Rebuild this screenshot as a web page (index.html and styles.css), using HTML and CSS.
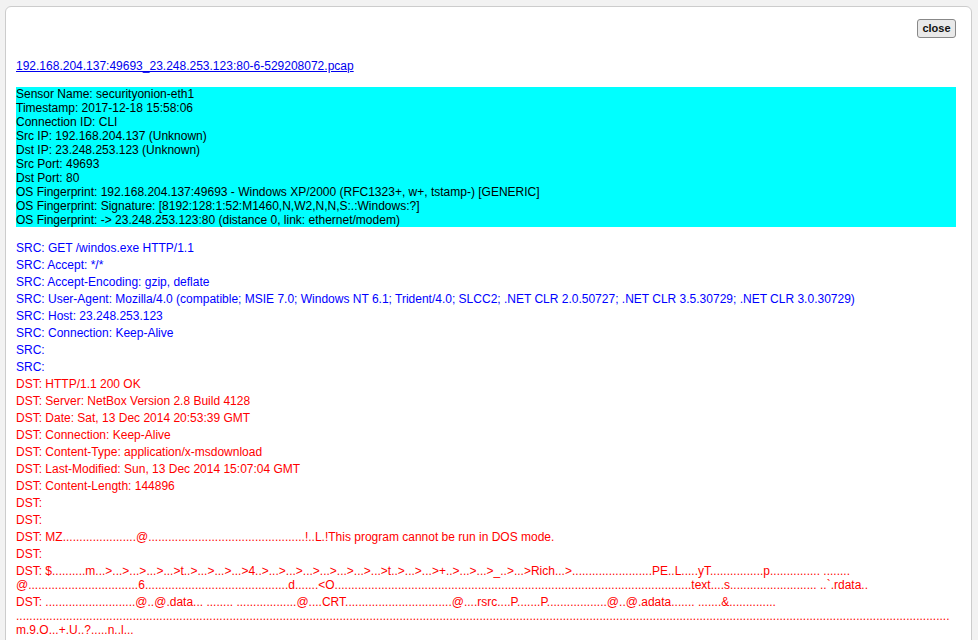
FILE: index.html
```html
<!DOCTYPE html>
<html lang="en">
<head>
<meta charset="utf-8">
<title>Transcript</title>
<link rel="stylesheet" href="styles.css">
</head>
<body>
<main class="dialog">
  <div class="toolbar"><button class="close" type="button">close</button></div>
  <a class="pcap" href="#">192.168.204.137:49693_23.248.253.123:80-6-529208072.pcap</a>
  <div class="meta">
    <div>Sensor Name: securityonion-eth1</div>
    <div>Timestamp: 2017-12-18 15:58:06</div>
    <div>Connection ID: CLI</div>
    <div>Src IP: 192.168.204.137 (Unknown)</div>
    <div>Dst IP: 23.248.253.123 (Unknown)</div>
    <div>Src Port: 49693</div>
    <div>Dst Port: 80</div>
    <div>OS Fingerprint: 192.168.204.137:49693 - Windows XP/2000 (RFC1323+, w+, tstamp-) [GENERIC]</div>
    <div>OS Fingerprint: Signature: [8192:128:1:52:M1460,N,W2,N,N,S:.:Windows:?]</div>
    <div>OS Fingerprint: -&gt; 23.248.253.123:80 (distance 0, link: ethernet/modem)</div>
  </div>
  <div class="transcript">
    <p class="src">SRC: GET /windos.exe HTTP/1.1</p>
    <p class="src">SRC: Accept: */*</p>
    <p class="src">SRC: Accept-Encoding: gzip, deflate</p>
    <p class="src">SRC: User-Agent: Mozilla/4.0 (compatible; MSIE 7.0; Windows NT 6.1; Trident/4.0; SLCC2; .NET CLR 2.0.50727; .NET CLR 3.5.30729; .NET CLR 3.0.30729)</p>
    <p class="src">SRC: Host: 23.248.253.123</p>
    <p class="src">SRC: Connection: Keep-Alive</p>
    <p class="src">SRC:</p>
    <p class="src">SRC:</p>
    <p class="dst">DST: HTTP/1.1 200 OK</p>
    <p class="dst">DST: Server: NetBox Version 2.8 Build 4128</p>
    <p class="dst">DST: Date: Sat, 13 Dec 2014 20:53:39 GMT</p>
    <p class="dst">DST: Connection: Keep-Alive</p>
    <p class="dst">DST: Content-Type: application/x-msdownload</p>
    <p class="dst">DST: Last-Modified: Sun, 13 Dec 2014 15:07:04 GMT</p>
    <p class="dst">DST: Content-Length: 144896</p>
    <p class="dst">DST:</p>
    <p class="dst">DST:</p>
    <p class="dst">DST: MZ......................@...............................................!..L.!This program cannot be run in DOS mode.</p>
    <p class="dst">DST:</p>
    <p class="dst">DST: $..........m...&gt;...&gt;...&gt;...&gt;...&gt;t..&gt;...&gt;...&gt;...&gt;4..&gt;...&gt;...&gt;...&gt;...&gt;...&gt;...&gt;...&gt;t..&gt;...&gt;...&gt;+..&gt;...&gt;...&gt;_..&gt;...&gt;Rich...&gt;........................PE..L.....yT................p............... ........ @.................................6...........................................d.......&lt;O...........................................................................................................text....s.......................... ..`.rdata..</p>
    <p class="dst">DST: ...........................@..@.data... ........ ..................@....CRT................................@....rsrc....P.......P..................@..@.adata....... .......&amp;.............. ........................................................................................................................................................................................................................................................................................ m.9.O...+.U..?.....n..l...</p>
  </div>
</main>
</body>
</html>
```
FILE: styles.css
```css
html, body {
  margin: 0;
  height: 640px;
  overflow: hidden;
  background: #f2f2f2;
}
body {
  padding: 6px 6px 0 5px;
  box-sizing: border-box;
  font-family: "Liberation Sans", Arial, sans-serif;
  font-size: 12px;
  line-height: 14px;
  color: #000;
}
.dialog {
  background: #fff;
  border: 1px solid #ccc;
  border-radius: 6px;
  padding: 12px 15px 20px 10px;
  min-height: 700px;
}
.toolbar {
  display: flex;
  justify-content: flex-end;
}
.close {
  width: 39px;
  height: 19px;
  padding: 0;
  font: bold 11px/1 "Liberation Sans", Arial, sans-serif;
  color: #111;
  background: #e9e9e9;
  border: 1px solid #888;
  border-radius: 3px;
}
.pcap {
  display: block;
  margin-top: 21px;
  color: #00e;
  text-decoration: underline;
}
.meta {
  margin-top: 14px;
  background: #0ff;
}
.transcript {
  margin-top: 14px;
}
.transcript p {
  margin: 0 0 3px;
}
.src { color: #00f; }
.dst { color: #f00; }
```
